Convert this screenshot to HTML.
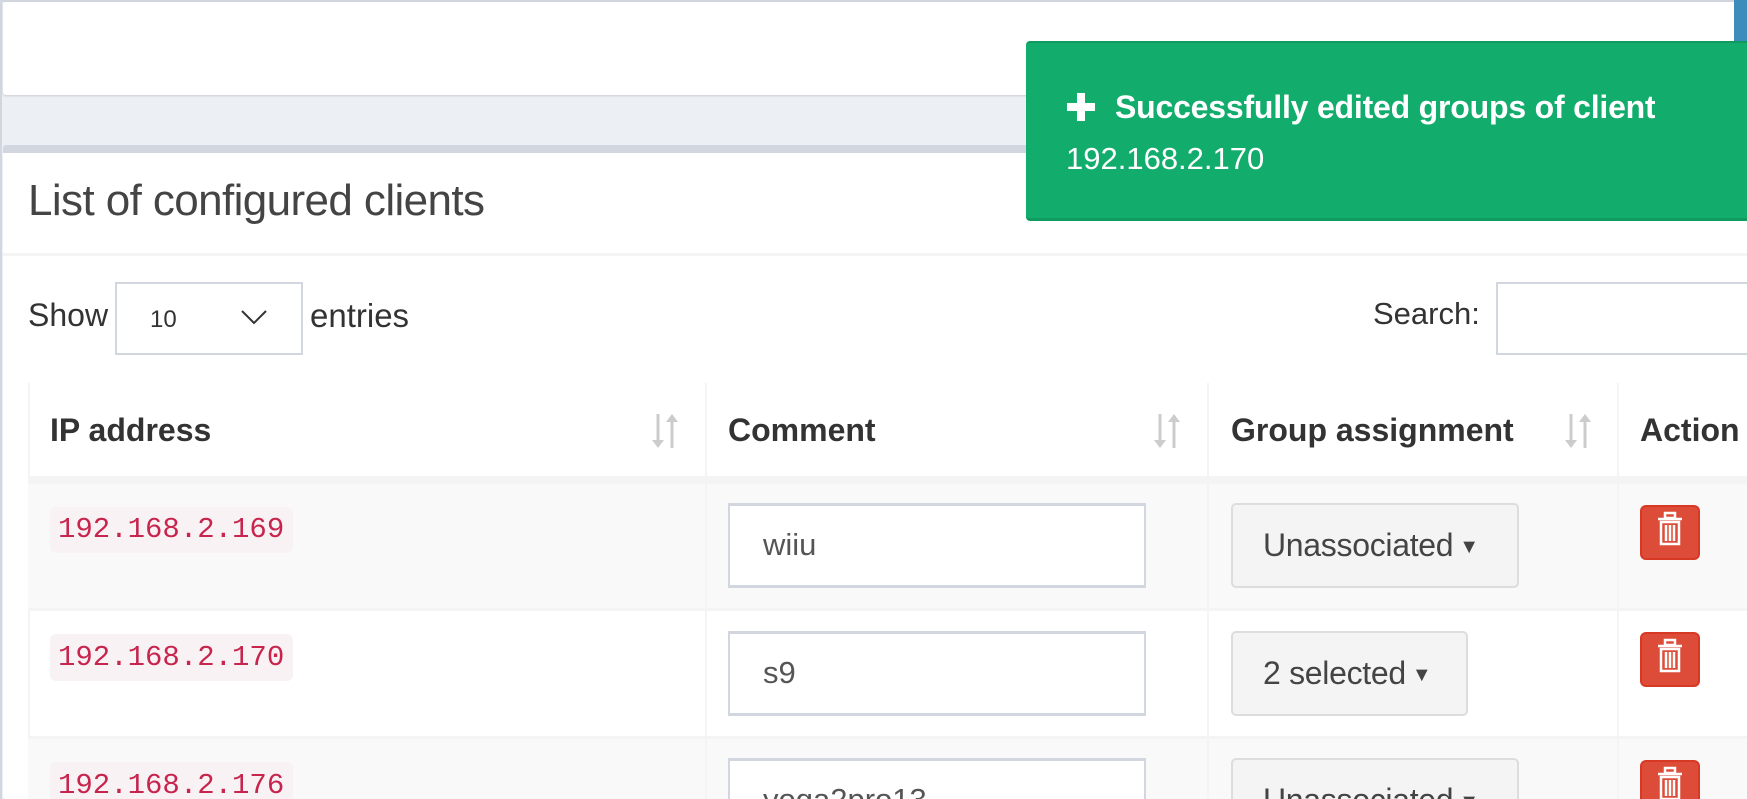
<!DOCTYPE html>
<html style="overflow:hidden;width:1747px;height:799px"><head><meta charset="utf-8"><style>
*{box-sizing:border-box;margin:0;padding:0}
body{width:1747px;height:799px;overflow:hidden;background:#ecf0f5;font-family:"Liberation Sans",sans-serif;color:#333;position:relative}
#w{position:absolute;left:0;top:0;width:1747px;height:799px;overflow:hidden}
.a{position:absolute}
.t{white-space:nowrap;overflow:hidden}
</style></head><body><div id="w">
<div class="a" style="left:0;top:0;width:1747px;height:2px;background:#d2d6de"></div>
<div class="a" style="left:0;top:0;width:2px;height:799px;background:#d2d6de"></div>
<div class="a" style="left:3px;top:2px;width:1744px;height:93px;background:#fff;border-radius:3px;box-shadow:0 1px 2px rgba(0,0,0,.15)"></div>
<div class="a" style="left:3px;top:145px;width:1744px;height:654px;background:#fff;border-top:8px solid #d2d6de;border-radius:3px"></div>
<div class="a t" style="left:28px;top:176px;font-size:44px;color:#444;letter-spacing:-0.6px">List of configured clients</div>
<div class="a" style="left:3px;top:253px;width:1744px;height:3px;background:#f4f4f4"></div>
<div class="a t" style="left:28px;top:297px;font-size:32px">Show</div>
<div class="a" style="left:115px;top:282px;width:188px;height:73px;border:2px solid #d2d6de;background:#fff"></div>
<div class="a t" style="left:150px;top:306px;font-size:24px">10</div>
<svg class="a" style="left:240px;top:308px" width="28" height="18"><path d="M2 3 L14 15 L26 3" stroke="#333" stroke-width="2" fill="none"/></svg>
<div class="a t" style="left:310px;top:297px;font-size:33px">entries</div>
<div class="a t" style="left:1373px;top:296px;font-size:31px">Search:</div>
<div class="a" style="left:1496px;top:282px;width:260px;height:73px;border:2px solid #d2d6de;background:#fff"></div>
<!-- table -->
<div class="a" style="left:28px;top:383px;width:1719px;height:416px;border-left:2px solid #f4f4f4;background:#fff"></div>
<div class="a" style="left:28px;top:476px;width:1719px;height:8px;background:#f4f4f4"></div>
<div class="a" style="left:28px;top:484px;width:1719px;height:124px;background:#f9f9f9"></div>
<div class="a" style="left:28px;top:608px;width:1719px;height:3px;background:#f4f4f4"></div>
<div class="a" style="left:28px;top:736px;width:1719px;height:3px;background:#f4f4f4"></div>
<div class="a" style="left:28px;top:739px;width:1719px;height:60px;background:#f9f9f9"></div>
<div class="a" style="left:705px;top:383px;width:2px;height:416px;background:#f4f4f4"></div>
<div class="a" style="left:1207px;top:383px;width:2px;height:416px;background:#f4f4f4"></div>
<div class="a" style="left:1617px;top:383px;width:2px;height:416px;background:#f4f4f4"></div>
<div class="a t" style="left:50px;top:412px;font-size:32px;font-weight:bold">IP address</div>
<div class="a t" style="left:728px;top:412px;font-size:32px;font-weight:bold">Comment</div>
<div class="a t" style="left:1231px;top:412px;font-size:32px;font-weight:bold">Group assignment</div>
<div class="a t" style="left:1640px;top:412px;font-size:32px;font-weight:bold">Action</div>
<svg class="a" style="left:648px;top:412px" width="36" height="38"><g stroke="#ccc" stroke-width="3" fill="#ccc"><line x1="10" y1="2" x2="10" y2="30"/><path d="M4 28 L10 36 L16 28Z" stroke="none"/><line x1="24" y1="8" x2="24" y2="36"/><path d="M18 10 L24 2 L30 10Z" stroke="none"/></g></svg>
<svg class="a" style="left:1150px;top:412px" width="36" height="38"><g stroke="#ccc" stroke-width="3" fill="#ccc"><line x1="10" y1="2" x2="10" y2="30"/><path d="M4 28 L10 36 L16 28Z" stroke="none"/><line x1="24" y1="8" x2="24" y2="36"/><path d="M18 10 L24 2 L30 10Z" stroke="none"/></g></svg>
<svg class="a" style="left:1561px;top:412px" width="36" height="38"><g stroke="#ccc" stroke-width="3" fill="#ccc"><line x1="10" y1="2" x2="10" y2="30"/><path d="M4 28 L10 36 L16 28Z" stroke="none"/><line x1="24" y1="8" x2="24" y2="36"/><path d="M18 10 L24 2 L30 10Z" stroke="none"/></g></svg>
<!-- rows -->
<div class="a t" style="left:50px;top:507px;width:243px;height:46px;background:#f9f2f4;border-radius:6px;color:#c7254e;font-family:'Liberation Mono',monospace;font-size:29px;line-height:46px;padding-left:8px">192.168.2.169</div>
<div class="a t" style="left:50px;top:634px;width:243px;height:47px;background:#f9f2f4;border-radius:6px;color:#c7254e;font-family:'Liberation Mono',monospace;font-size:29px;line-height:47px;padding-left:8px">192.168.2.170</div>
<div class="a t" style="left:50px;top:762px;width:243px;height:37px;background:#f9f2f4;border-radius:6px 6px 0 0;color:#c7254e;font-family:'Liberation Mono',monospace;font-size:29px;line-height:47px;padding-left:8px">192.168.2.176</div>

<div class="a t" style="left:728px;top:503px;width:418px;height:85px;border:2px solid #d2d6de;border-top-width:3px;border-bottom-width:3px;background:#fff;font-size:31px;line-height:78px;padding-left:33px;color:#555">wiiu</div>
<div class="a t" style="left:728px;top:631px;width:418px;height:85px;border:2px solid #d2d6de;border-top-width:3px;border-bottom-width:3px;background:#fff;font-size:31px;line-height:78px;padding-left:33px;color:#555">s9</div>
<div class="a t" style="left:728px;top:758px;width:418px;height:41px;border:2px solid #d2d6de;border-bottom:none;border-top-width:3px;background:#fff;font-size:31px;line-height:78px;padding-left:33px;color:#555">yoga2pro13</div>

<div class="a t" style="left:1231px;top:503px;width:288px;height:85px;border:2px solid #ddd;border-radius:5px;background:#f4f4f4;font-size:32px;line-height:80px;padding-left:30px;color:#444;letter-spacing:-0.3px">Unassociated<span style="font-size:20px;vertical-align:3px;margin-left:6px">▼</span></div>
<div class="a t" style="left:1231px;top:631px;width:237px;height:85px;border:2px solid #ddd;border-radius:5px;background:#f4f4f4;font-size:32px;line-height:80px;padding-left:30px;color:#444;letter-spacing:-0.3px">2 selected<span style="font-size:20px;vertical-align:3px;margin-left:6px">▼</span></div>
<div class="a t" style="left:1231px;top:758px;width:288px;height:41px;border:2px solid #ddd;border-bottom:none;border-radius:5px 5px 0 0;background:#f4f4f4;font-size:32px;line-height:80px;padding-left:30px;color:#444;letter-spacing:-0.3px">Unassociated<span style="font-size:20px;vertical-align:3px;margin-left:6px">▼</span></div>

<svg class="a" style="left:1640px;top:505px" width="60" height="55"><rect x="1" y="1" width="58" height="53" rx="5" fill="#dd4b39" stroke="#d73925" stroke-width="2"/><g fill="none" stroke="#fff" stroke-width="2.5"><rect x="25" y="8" width="10" height="5"/><line x1="18" y1="14" x2="42" y2="14"/><rect x="21" y="17" width="18" height="22"/><line x1="26" y1="20" x2="26" y2="36"/><line x1="30" y1="20" x2="30" y2="36"/><line x1="34" y1="20" x2="34" y2="36"/></g></svg>
<svg class="a" style="left:1640px;top:632px" width="60" height="55"><rect x="1" y="1" width="58" height="53" rx="5" fill="#dd4b39" stroke="#d73925" stroke-width="2"/><g fill="none" stroke="#fff" stroke-width="2.5"><rect x="25" y="8" width="10" height="5"/><line x1="18" y1="14" x2="42" y2="14"/><rect x="21" y="17" width="18" height="22"/><line x1="26" y1="20" x2="26" y2="36"/><line x1="30" y1="20" x2="30" y2="36"/><line x1="34" y1="20" x2="34" y2="36"/></g></svg>
<svg class="a" style="left:1640px;top:760px" width="60" height="39"><rect x="1" y="1" width="58" height="53" rx="5" fill="#dd4b39" stroke="#d73925" stroke-width="2"/><g fill="none" stroke="#fff" stroke-width="2.5"><rect x="25" y="8" width="10" height="5"/><line x1="18" y1="14" x2="42" y2="14"/><rect x="21" y="17" width="18" height="22"/><line x1="26" y1="20" x2="26" y2="36"/><line x1="30" y1="20" x2="30" y2="36"/><line x1="34" y1="20" x2="34" y2="36"/></g></svg>

<!-- toast -->
<div class="a" style="left:1734px;top:0;width:13px;height:70px;background:#3c8dbc"></div>
<div class="a" style="left:1026px;top:41px;width:721px;height:180px;background:#12ad6d;border-top:2px solid #0f9a5f;border-bottom:3px solid #0f9a5f;border-radius:4px 0 0 4px"></div>
<svg class="a" style="left:1066px;top:92px" width="30" height="30"><path d="M11 1h8v10h10v8H19v10h-8V19H1v-8h10z" fill="#fff"/></svg>
<div class="a t" style="left:1115px;top:89px;font-size:32px;font-weight:bold;color:#fff;letter-spacing:-0.2px">Successfully edited groups of client</div>
<div class="a t" style="left:1066px;top:141px;font-size:31px;color:#fff">192.168.2.170</div>
</div></body></html>
